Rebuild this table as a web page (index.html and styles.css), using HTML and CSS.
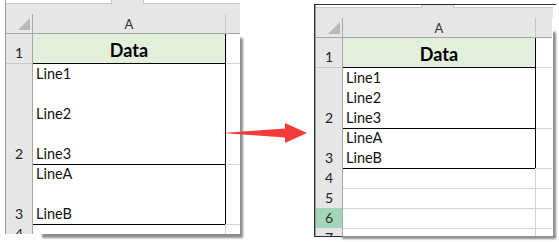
FILE: index.html
```html
<!DOCTYPE html>
<html>
<head>
<meta charset="utf-8">
<link rel="stylesheet" href="styles.css">
</head>
<body>
<div class="scene">
  <div class="sheet sheet-before">
    <div class="strip"><span class="namebox"></span><span class="notch"></span><span class="fxbox"></span></div>
    <div class="gap"></div>
    <div class="row r20 head">
      <div class="rh corner"><span class="tri"></span></div>
      <div class="ch">A</div>
      <div class="ch ch-x"></div>
    </div>
    <div class="row r30">
      <div class="rh">1</div>
      <div class="c boxed green"><span class="title">Data</span></div>
      <div class="x"></div>
    </div>
    <div class="row r100">
      <div class="rh">2</div>
      <div class="c boxed"><span class="txt">Line1

Line2

Line3</span></div>
      <div class="x"></div>
    </div>
    <div class="row r60">
      <div class="rh">3</div>
      <div class="c boxed"><span class="txt">LineA

LineB</span></div>
      <div class="x"></div>
    </div>
    <div class="row r20">
      <div class="rh">4</div>
      <div class="c"></div>
      <div class="x"></div>
    </div>
  </div>

  <div class="frame">
    <div class="sheet sheet-after">
      <div class="strip"><span class="namebox"></span><span class="notch"></span><span class="fxbox"></span></div>
      <div class="gap"></div>
      <div class="row r20 head">
        <div class="rh corner"><span class="tri"></span></div>
        <div class="ch">A</div>
        <div class="ch ch-x"></div>
      </div>
      <div class="row r30">
        <div class="rh">1</div>
        <div class="c boxed green"><span class="title">Data</span></div>
        <div class="x"></div>
      </div>
      <div class="row r60">
        <div class="rh">2</div>
        <div class="c boxed"><span class="txt">Line1
Line2
Line3</span></div>
        <div class="x"></div>
      </div>
      <div class="row r40">
        <div class="rh">3</div>
        <div class="c boxed"><span class="txt">LineA
LineB</span></div>
        <div class="x"></div>
      </div>
      <div class="row r20">
        <div class="rh">4</div>
        <div class="c"></div>
        <div class="x"></div>
      </div>
      <div class="row r20">
        <div class="rh">5</div>
        <div class="c"></div>
        <div class="x"></div>
      </div>
      <div class="row r20">
        <div class="rh sel">6</div>
        <div class="c"></div>
        <div class="x"></div>
      </div>
      <div class="row r20">
        <div class="rh">7</div>
        <div class="c"></div>
        <div class="x"></div>
      </div>
    </div>
  </div>

  <svg class="arrow" width="559" height="242" viewBox="0 0 559 242">
    <polygon points="222,133 285,128.5 285,123 307,133 285,143 285,137.5" fill="#f23b3b"/>
  </svg>
</div>
</body>
</html>
```

FILE: styles.css
```css
* { box-sizing: border-box; }
html, body { margin: 0; padding: 0; background: #fff; }
body {
  font-family: "Lato", "Liberation Sans", sans-serif;
  color: #000;
  width: 559px;
  height: 242px;
  overflow: hidden;
}
.scene {
  position: relative;
  display: flex;
  align-items: flex-start;
  padding-left: 5px;
  width: 559px;
  height: 242px;
}

/* sheet windows */
.sheet {
  display: flex;
  flex-direction: column;
  background: #fff;
  overflow: hidden;
}
.sheet-before {
  width: 235px;
  height: 234px;
  border-left: 1px solid #9c9c9c;
  box-shadow: 20px 21px 2px -17px #8e8e8e;
}
.frame {
  margin-left: 74px;
  margin-top: 4px;
  width: 242px;
  height: 233px;
  border-top: 1px solid #2e2e2e;
  border-left: 1px solid #2e2e2e;
  border-bottom: 1px solid #2e2e2e;
  background: #fff;
}
.sheet-after {
  width: 238px;
  height: 231px;
  border-left: 1px solid #9c9c9c;
  box-shadow: 15px 15px 2px -12px #8e8e8e;
}
.sheet-after .row { grid-template-columns: 27px 193px 16px; }
.sheet-after .strip { height: 3px; }

/* formula bar remnant */
.strip {
  display: flex;
  height: 4px;
  flex: none;
  background: #e6e6e6;
}
.namebox {
  width: 106px;
  background: #fff;
  border-bottom: 1px solid #c6c6c6;
  border-right: 1px solid #c6c6c6;
}
.notch { width: 31px; }
.fxbox {
  flex: 1;
  background: #fff;
  border-bottom: 1px solid #c6c6c6;
  border-left: 1px solid #c6c6c6;
}
.gap {
  height: 10px;
  flex: none;
  background: #e6e6e6;
}

/* grid rows */
.row {
  display: grid;
  grid-template-columns: 27px 193px 14px;
  flex: none;
}
.r20 { height: 20px; }
.r30 { height: 30px; }
.r40 { height: 40px; }
.r60 { height: 60px; }
.r100 { height: 100px; }

.rh {
  background: #e6e6e6;
  border-right: 1px solid #a6a6a6;
  border-bottom: 1px solid #c8c8c8;
  display: flex;
  align-items: flex-end;
  justify-content: center;
  font-size: 14px;
  line-height: 20px;
  color: #222;
}
.rh.sel { background: #a3d6b8; color: #1e3a28; }
.head .rh, .head .ch { border-bottom: 1px solid #a6a6a6; }
.corner { position: relative; }
.tri {
  position: absolute;
  right: 2px;
  bottom: 3px;
  width: 0;
  height: 0;
  border-left: 12px solid transparent;
  border-bottom: 12px solid #b8b8b8;
}
.ch {
  background: #e6e6e6;
  border-right: 1px solid #c8c8c8;
  display: flex;
  align-items: center;
  justify-content: center;
  font-size: 13px;
  color: #333;
  padding-top: 1px;
}
.ch-x { border-right: none; }

.c {
  border-right: 1px solid #d4d4d4;
  border-bottom: 1px solid #d4d4d4;
  display: flex;
  flex-direction: column;
  justify-content: flex-end;
  padding: 0 3px;
}
.c.boxed { border-right-color: #000; border-bottom-color: #000; }
.c.green { background: #e2efda; align-items: center; }
.x { border-bottom: 1px solid #d4d4d4; }

.txt {
  white-space: pre-line;
  font-size: 14.5px;
  line-height: 20px;
  color: #111;
}
.title {
  font-weight: 700;
  font-size: 18px;
  line-height: 20px;
  padding-bottom: 3px;
}

.arrow {
  position: absolute;
  left: 0;
  top: 0;
  pointer-events: none;
}
```
